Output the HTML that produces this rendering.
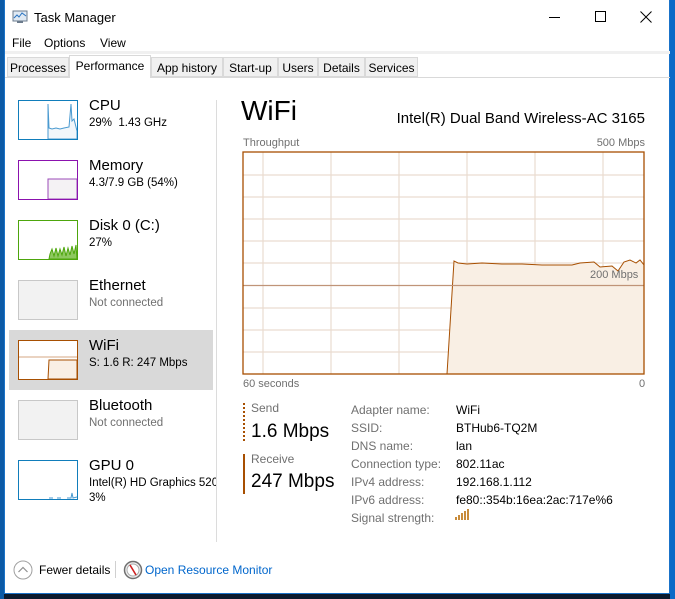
<!DOCTYPE html>
<html><head><meta charset="utf-8"><style>
*{margin:0;padding:0;box-sizing:border-box}
body{width:675px;height:599px;overflow:hidden;background:#0b1a2e;font-family:"Liberation Sans",sans-serif;position:relative;color:#000}
.a{position:absolute;white-space:nowrap}
#win{position:absolute;left:4px;top:0;width:666px;height:594px;background:#fff;border:1px solid #1a73c9;border-top:none}
.tab{position:absolute;top:57px;height:20px;background:#f0f0f0;border:1px solid #d9d9d9;font-size:12px;padding:3px 0 0 0;text-align:center;color:#000;white-space:nowrap}
.th{position:absolute;left:18px;width:60px;height:40px;border:1px solid}
.t1{position:absolute;left:89px;font-size:15px;white-space:nowrap}
.t2{position:absolute;left:89px;font-size:11.5px;white-space:nowrap}
.lab{font-size:12px;color:#707070}
.val{font-size:12px;color:#000}
</style></head><body>
<div class="a" style="left:0;top:0;width:4px;height:599px;background:#0c5aa6"></div>
<div class="a" style="left:670px;top:0;width:5px;height:599px;background:#0a6ac7"></div>
<div id="win"></div>
<svg class="a" style="left:12px;top:10px" width="16" height="14"><rect x="1" y="1" width="14" height="10" fill="#dfe9f3" stroke="#6b7b8c"/><polyline points="2,8 5,5 7,7 10,3 14,6" fill="none" stroke="#2a73c0"/><rect x="5" y="11" width="6" height="2" fill="#6b7b8c"/></svg>
<div class="a" style="left:34px;top:10px;font-size:13px">Task Manager</div>
<div class="a" style="left:549px;top:17px;width:11px;height:1px;background:#000"></div>
<div class="a" style="left:595px;top:11px;width:11px;height:11px;border:1px solid #000"></div>
<svg class="a" style="left:640px;top:11px" width="12" height="12"><path d="M0.5 0.5L11.5 11.5M11.5 0.5L0.5 11.5" stroke="#000"/></svg>
<div class="a" style="left:12px;top:36px;font-size:12px">File</div>
<div class="a" style="left:44px;top:36px;font-size:12px">Options</div>
<div class="a" style="left:100px;top:36px;font-size:12px">View</div>
<div class="a" style="left:5px;top:51px;width:665px;height:3px;background:#f0f0f0"></div>
<div class="a" style="left:5px;top:77px;width:665px;height:1px;background:#d9d9d9"></div>
<div class="tab" style="left:7px;width:62px">Processes</div>
<div class="tab" style="left:69px;top:55px;height:23px;width:82px;background:#fff;border-bottom:none;padding-top:3px">Performance</div>
<div class="tab" style="left:151px;width:72px">App history</div>
<div class="tab" style="left:223px;width:55px">Start-up</div>
<div class="tab" style="left:278px;width:40px">Users</div>
<div class="tab" style="left:318px;width:47px">Details</div>
<div class="tab" style="left:365px;width:53px">Services</div>
<div class="a" style="left:216px;top:100px;width:1px;height:442px;background:#dcdcdc"></div>
<div class="a" style="left:9px;top:330px;width:204px;height:60px;background:#d9d9d9"></div>

<div class="th" style="top:100px;border-color:#117dbb;background:#fff"><svg width="58" height="38"><path d="M29 38 L29 3 L30 27 L33 28 L37 27 L41 28 L45 27 L50 26 L52 3 L53 20 L55 18 L58 30 L58 38Z" fill="#f1f6fa" stroke="#4a9ad0" stroke-width="1"/></svg></div>
<div class="t1" style="top:97px">CPU</div><div class="t2" style="top:117px">29%&nbsp; 1.43 GHz</div>

<div class="th" style="top:160px;border-color:#8b12ae"><svg width="58" height="38"><path d="M29 38 L29 18 L58 18 L58 38Z" fill="#f4f2f4" stroke="#9b4bb9"/></svg></div>
<div class="t1" style="top:157px">Memory</div><div class="t2" style="top:177px">4.3/7.9 GB (54%)</div>

<div class="th" style="top:220px;border-color:#4da60c"><svg width="58" height="38"><path d="M30 38 L31 33 L33 28 L35 35 L37 27 L39 35 L41 28 L43 34 L45 26 L47 35 L49 27 L51 34 L53 25 L55 33 L57 24 L58 38Z" fill="#8ec860" stroke="#4da60c"/></svg></div>
<div class="t1" style="top:217px">Disk 0 (C:)</div><div class="t2" style="top:237px">27%</div>

<div class="th" style="top:280px;border-color:#c8c8c8;background:#f2f2f2"></div>
<div class="t1" style="top:277px">Ethernet</div><div class="t2" style="top:297px;color:#707070">Not connected</div>

<div class="th" style="top:340px;border-color:#a74f01;background:#fff"><svg width="58" height="38"><line x1="0" y1="16" x2="58" y2="16" stroke="#d5a783"/><path d="M29 38 L30 19 L58 19 L58 38Z" fill="#f9efe4" stroke="#a74f01"/></svg></div>
<div class="t1" style="top:337px">WiFi</div><div class="t2" style="top:357px">S: 1.6 R: 247 Mbps</div>

<div class="th" style="top:400px;border-color:#c8c8c8;background:#f2f2f2"></div>
<div class="t1" style="top:397px">Bluetooth</div><div class="t2" style="top:417px;color:#707070">Not connected</div>

<div class="th" style="top:460px;border-color:#117dbb;background:#fff"><svg width="58" height="38"><path d="M30 37 L34 37 M38 37 L42 37 M48 37 L52 37 L53 32 L54 37 L58 36" stroke="#4a9ad0" fill="none"/></svg></div>
<div class="t1" style="top:457px">GPU 0</div><div class="t2" style="top:477px;width:127px;overflow:hidden">Intel(R) HD Graphics 520</div><div class="t2" style="top:492px">3%</div>

<div class="a" style="left:241px;top:95px;font-size:28px">WiFi</div>
<div class="a" style="right:30px;top:110px;font-size:15px">Intel(R) Dual Band Wireless-AC 3165</div>
<div class="a lab" style="left:243px;top:137px;font-size:11px">Throughput</div>
<div class="a lab" style="right:30px;top:137px;font-size:11px">500 Mbps</div>
<svg class="a" style="left:242px;top:151px" width="404" height="225">
<g stroke="#eadcd0" stroke-width="1.2">
<line x1="21" y1="1" x2="21" y2="223"/><line x1="89" y1="1" x2="89" y2="223"/><line x1="157" y1="1" x2="157" y2="223"/><line x1="225" y1="1" x2="225" y2="223"/><line x1="293" y1="1" x2="293" y2="223"/><line x1="361" y1="1" x2="361" y2="223"/>
<line x1="1" y1="24" x2="402" y2="24"/><line x1="1" y1="46" x2="402" y2="46"/><line x1="1" y1="68" x2="402" y2="68"/><line x1="1" y1="90" x2="402" y2="90"/><line x1="1" y1="112" x2="402" y2="112"/><line x1="1" y1="157" x2="402" y2="157"/><line x1="1" y1="179" x2="402" y2="179"/><line x1="1" y1="201" x2="402" y2="201"/>
</g>
<path d="M205 223 L212 110 L216 112 L225 113 L240 112 L260 113 L280 113 L300 114 L330 114 L338 112 L352 111 L358 116 L370 115 L376 120 L382 111 L388 109 L394 112 L398 109 L402 114 L402 223Z" fill="#f9efe4" stroke="#a74f01" stroke-width="1"/>
<line x1="1" y1="134.5" x2="402" y2="134.5" stroke="#c09478" stroke-width="1.3"/>
<rect x="1" y="1" width="401" height="222" fill="none" stroke="#a74f01" stroke-width="1.3"/>
</svg>
<div class="a lab" style="left:590px;top:269px;font-size:11px;color:#707070">200 Mbps</div>
<div class="a lab" style="left:243px;top:378px;font-size:11px">60 seconds</div>
<div class="a lab" style="left:639px;top:378px;font-size:11px">0</div>

<div class="a" style="left:243px;top:403px;width:0;height:38px;border-left:2px dotted #a74f01"></div>
<div class="a lab" style="left:251px;top:401px">Send</div>
<div class="a" style="left:251px;top:421px;font-size:19px">1.6 Mbps</div>
<div class="a" style="left:243px;top:454px;width:2px;height:40px;background:#a74f01"></div>
<div class="a lab" style="left:251px;top:452px">Receive</div>
<div class="a" style="left:251px;top:471px;font-size:19px">247 Mbps</div>

<div class="a lab" style="left:351px;top:401px;line-height:18px">Adapter name:<br>SSID:<br>DNS name:<br>Connection type:<br>IPv4 address:<br>IPv6 address:<br>Signal strength:</div>
<div class="a val" style="left:456px;top:401px;line-height:18px">WiFi<br>BTHub6-TQ2M<br>lan<br>802.11ac<br>192.168.1.112<br>fe80::354b:16ea:2ac:717e%6</div>
<svg class="a" style="left:454px;top:508px" width="18" height="13"><g fill="#c88b3a"><rect x="1" y="9" width="2" height="3"/><rect x="4" y="7" width="2" height="5"/><rect x="7" y="5" width="2" height="7"/><rect x="10" y="3" width="2" height="9"/><rect x="13" y="1" width="2" height="11"/></g></svg>

<svg class="a" style="left:13px;top:560px" width="20" height="20"><circle cx="10" cy="10" r="9" fill="#fff" stroke="#a0a0a0"/><path d="M5.5 12 L10 7.5 L14.5 12" fill="none" stroke="#909090" stroke-width="1.2"/></svg>
<div class="a" style="left:39px;top:563px;font-size:12px">Fewer details</div>
<div class="a" style="left:115px;top:561px;width:1px;height:17px;background:#d0d0d0"></div>
<svg class="a" style="left:123px;top:560px" width="20" height="20"><circle cx="10" cy="10" r="8.5" fill="#eee" stroke="#707070" stroke-width="1.5"/><circle cx="10" cy="10" r="6" fill="#fff" stroke="#aaa"/><path d="M7 5 L13 15" stroke="#d02020" stroke-width="1.6"/></svg>
<div class="a" style="left:145px;top:563px;font-size:12px;color:#0066cc">Open Resource Monitor</div>
</body></html>
